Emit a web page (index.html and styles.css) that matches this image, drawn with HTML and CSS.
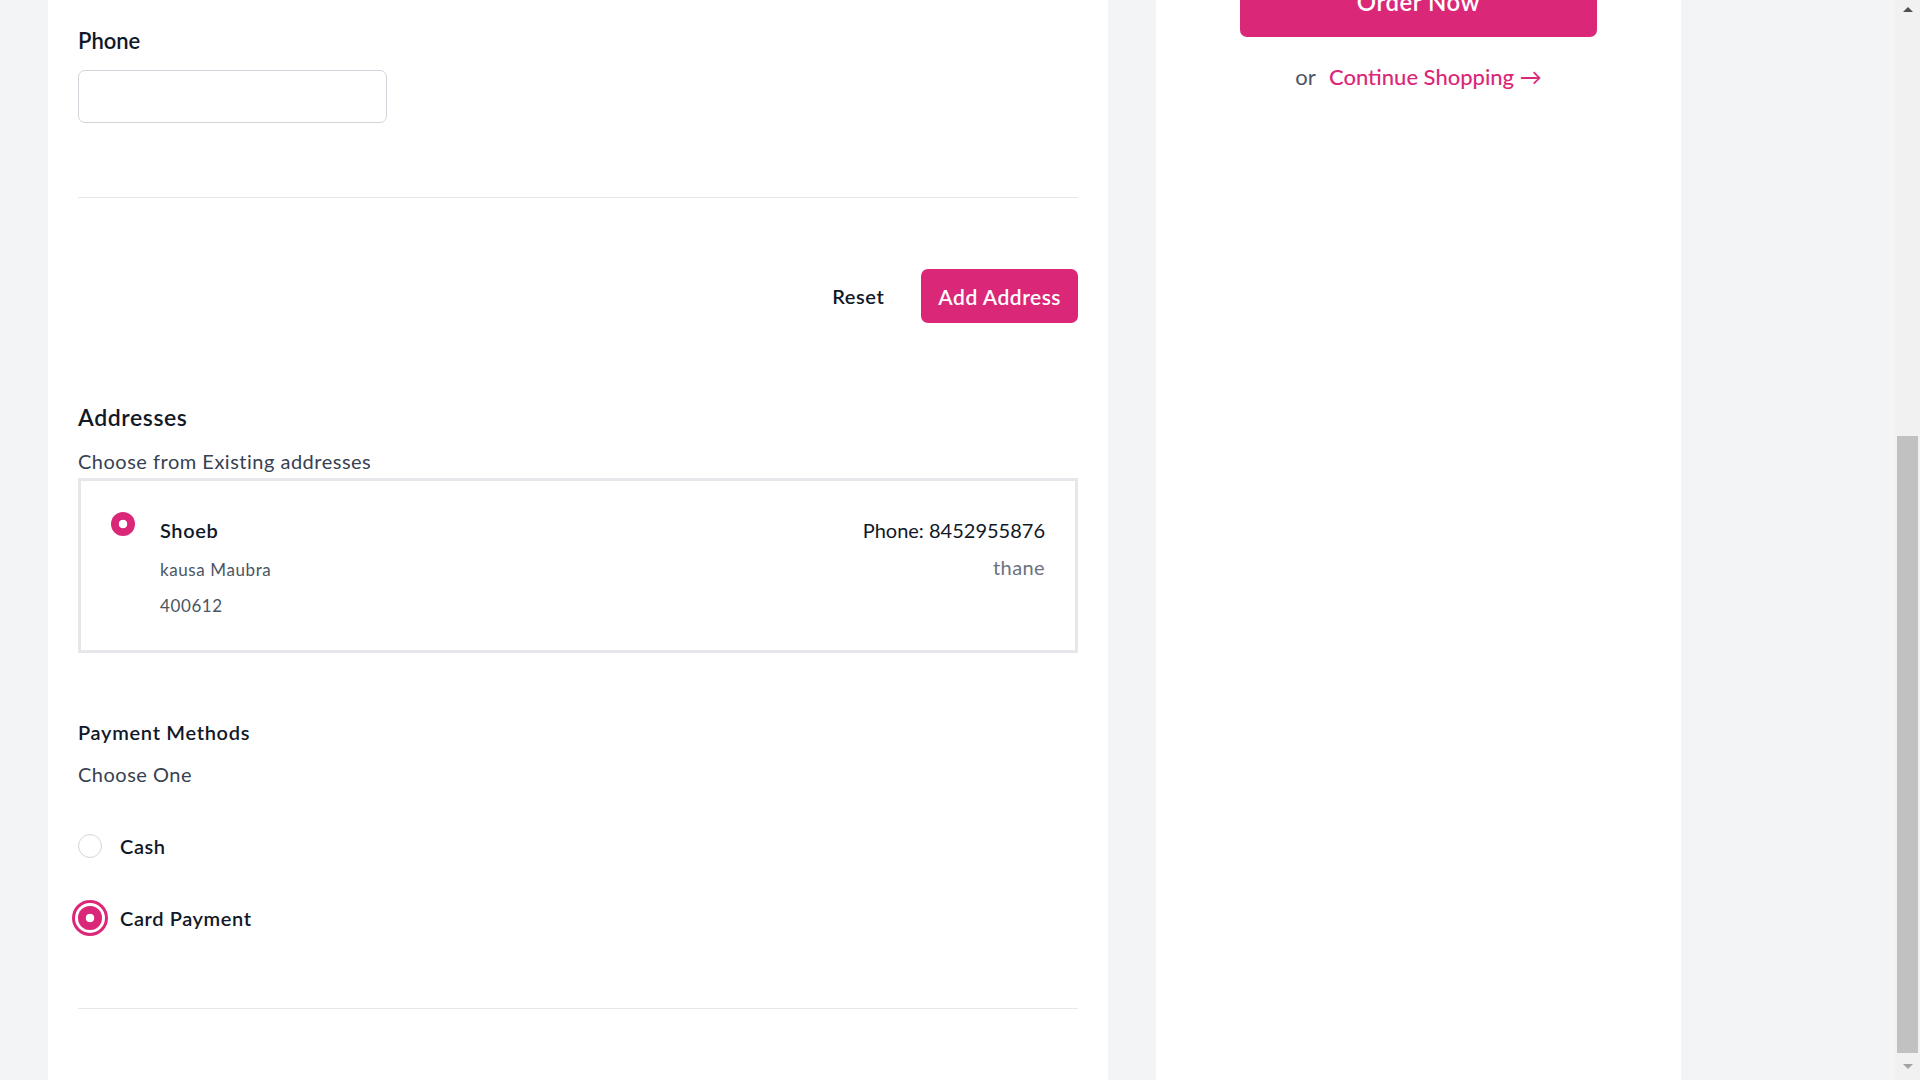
FILE: index.html
```html
<!DOCTYPE html>
<html lang="en">
<head>
    <meta charset="UTF-8">
    <meta name="viewport" content="width=device-width, initial-scale=1.0">
    <title>Checkout</title>
    <link rel="stylesheet" href="styles.css">
</head>
<body>
    <div class="page">
        <form class="checkout-form">
            <label class="field-label" for="phone">Phone</label>
            <input class="text-input" type="text" id="phone" name="phone">

            <div class="divider divider-top"></div>

            <div class="form-actions">
                <button type="reset" class="btn-reset">Reset</button>
                <button type="button" class="btn-primary">Add Address</button>
            </div>

            <h2 class="section-title">Addresses</h2>
            <p class="section-hint">Choose from Existing addresses</p>

            <label class="address-card">
                <input type="radio" class="radio" name="address" checked>
                <div class="address-main">
                    <div class="address-name">Shoeb</div>
                    <div class="address-line address-line-first">kausa Maubra</div>
                    <div class="address-line">400612</div>
                </div>
                <div class="address-side">
                    <div class="address-phone">Phone: 8452955876</div>
                    <div class="address-city">thane</div>
                </div>
            </label>

            <h3 class="payment-title">Payment Methods</h3>
            <p class="section-hint payment-hint">Choose One</p>

            <div class="payment-options">
                <label class="payment-option">
                    <input type="radio" class="radio" name="payment" value="cash">
                    <span>Cash</span>
                </label>
                <label class="payment-option">
                    <input type="radio" class="radio radio-focus" name="payment" value="card" checked>
                    <span>Card Payment</span>
                </label>
            </div>

            <div class="divider divider-bottom"></div>
        </form>

        <aside class="summary">
            <button type="button" class="btn-order">Order Now</button>
            <p class="continue">
                or <a href="#" class="continue-link">Continue Shopping &rarr;</a>
            </p>
        </aside>
    </div>

    <div class="scrollbar">
        <div class="scroll-arrow scroll-up"></div>
        <div class="scroll-thumb"></div>
        <div class="scroll-arrow scroll-down"></div>
    </div>
</body>
</html>
```

FILE: styles.css
```css
* {
    margin: 0;
    padding: 0;
    box-sizing: border-box;
}

body {
    font-family: 'Segoe UI', 'Lato', sans-serif;
    background: #f3f4f6;
    height: 1080px;
    overflow: hidden;
    display: flex;
    color: #111827;
}

.page {
    flex: 1;
    display: flex;
    gap: 48px;
    padding-left: 48px;
}

/* left column - address + payment form */
.checkout-form {
    width: 1060px;
    height: 1080px;
    background: #fff;
    padding: 26px 30px 0;
    display: flex;
    flex-direction: column;
}

.field-label {
    font-size: 22px;
    font-weight: 600;
    line-height: 30px;
}

.text-input {
    margin-top: 14px;
    width: 309px;
    height: 53px;
    border: 1.25px solid #d1d5db;
    border-radius: 7px;
    font: inherit;
}

.divider {
    border-top: 1.25px solid #e5e7eb;
}

.divider-top {
    margin-top: 74px;
}

.divider-bottom {
    margin-top: 75px;
}

.form-actions {
    margin-top: 71px;
    display: flex;
    justify-content: flex-end;
    align-items: center;
    gap: 37px;
}

.btn-reset {
    background: none;
    border: none;
    font: inherit;
    font-size: 20px;
    font-weight: 600;
    letter-spacing: 0.6px;
    color: #111827;
}

.btn-primary {
    height: 54px;
    padding: 0 17px;
    background: #db2777;
    border: none;
    border-radius: 7px;
    color: #fff;
    font: inherit;
    font-size: 21px;
    font-weight: 600;
    letter-spacing: 0.5px;
}

.section-title {
    margin-top: 79px;
    font-size: 23px;
    font-weight: 600;
    line-height: 30px;
    letter-spacing: 0.6px;
}

.section-hint {
    margin-top: 14px;
    font-size: 20px;
    line-height: 30px;
    letter-spacing: 0.5px;
    color: #374151;
}

.address-card {
    margin-top: 1.5px;
    height: 175px;
    border: 3px solid #e5e7eb;
    padding: 34px 30px 0;
    display: flex;
    align-items: flex-start;
}

.radio {
    appearance: none;
    -webkit-appearance: none;
    width: 24px;
    height: 24px;
    flex-shrink: 0;
    border: 1.25px solid #d1d5db;
    border-radius: 50%;
    background: #fff;
}

.radio:checked {
    border: none;
    background: radial-gradient(circle, #fff 0 4px, #db2777 4.6px);
}

.radio-focus {
    box-shadow: 0 0 0 3px #fff, 0 0 0 6px #db2777;
}

.address-card .radio {
    margin-top: -3px;
}

.address-main {
    flex: 1;
    margin-left: 25px;
}

.address-name {
    font-size: 20px;
    font-weight: 600;
    line-height: 30px;
    letter-spacing: 0.6px;
}

.address-line {
    font-size: 17px;
    line-height: 36px;
    letter-spacing: 0.6px;
    color: #4b5563;
}

.address-line-first {
    margin-top: 7px;
}

.address-side {
    text-align: right;
    font-size: 20px;
    line-height: 30px;
}

.address-city {
    margin-top: 7px;
    letter-spacing: 0.4px;
    color: #6b7280;
}

.payment-title {
    margin-top: 64px;
    font-size: 20px;
    font-weight: 600;
    line-height: 30px;
    letter-spacing: 0.7px;
}

.payment-hint {
    margin-top: 12px;
}

.payment-options {
    margin-top: 42px;
    display: flex;
    flex-direction: column;
    gap: 42px;
}

.payment-option {
    display: flex;
    align-items: center;
    gap: 18px;
    height: 30px;
    font-size: 20px;
    font-weight: 600;
    letter-spacing: 0.6px;
}

/* right column - order summary */
.summary {
    width: 525px;
    height: 1080px;
    background: #fff;
    display: flex;
    flex-direction: column;
    align-items: center;
}

.btn-order {
    margin-top: -34px;
    width: 357px;
    height: 71px;
    background: #db2777;
    border: none;
    border-radius: 7px;
    color: #fff;
    font: inherit;
    font-size: 24px;
    font-weight: 600;
    letter-spacing: 0.5px;
}

.continue {
    margin-top: 25px;
    font-size: 22px;
    line-height: 30px;
    color: #4b5563;
}

.continue-link {
    margin-left: 8px;
    color: #db2777;
    font-weight: 500;
    text-decoration: none;
}

/* fake browser scrollbar */
.scrollbar {
    width: 25px;
    height: 1080px;
    background: #f1f1f1;
    display: flex;
    flex-direction: column;
    align-items: center;
}

.scroll-arrow {
    width: 0;
    height: 0;
    border-left: 5.5px solid transparent;
    border-right: 5.5px solid transparent;
}

.scroll-up {
    margin-top: 7px;
    border-bottom: 5px solid #505050;
}

.scroll-thumb {
    margin-top: 424px;
    width: 21px;
    height: 617px;
    background: #c1c1c1;
}

.scroll-down {
    margin-top: 11px;
    border-top: 5px solid #a3a3a3;
}
```
